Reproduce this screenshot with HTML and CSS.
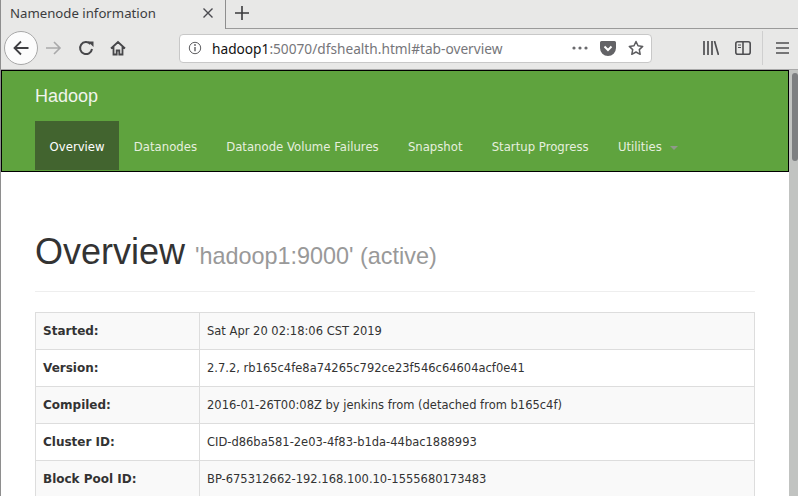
FILE: index.html
```html
<!DOCTYPE html>
<html lang="en">
<head>
<meta charset="utf-8">
<title>Namenode information</title>
<link rel="stylesheet" href="styles.css">
</head>
<body>
<div class="tabstrip">
  <div class="tab">
    <span class="tab-title">Namenode information</span>
    <svg class="tab-close" width="12" height="12" viewBox="0 0 12 12"><path d="M1.5 1.5l9 9M10.500 1.500l-9 9" stroke="#4a4a4f" stroke-width="1.400" fill="none"/></svg>
  </div>
  <div class="tab-rest">
    <svg class="new-tab" width="16" height="16" viewBox="0 0 16 16"><path d="M8 1v14M1 8h14" stroke="#3a3a3d" stroke-width="1.600" fill="none"/></svg>
  </div>
</div>
<div class="toolbar">
  <div class="back-btn">
    <svg width="18" height="18" viewBox="0 0 18 18"><path d="M16.500 9H2.500M9 2.500L2.500 9 9 15.500" stroke="#3f3f42" stroke-width="1.800" fill="none"/></svg>
  </div>
  <svg class="forward" width="18" height="18" viewBox="0 0 18 18"><path d="M2 9h14M10 3l6 6-6 6" stroke="#a9a9aa" stroke-width="1.600" fill="none"/></svg>
  <svg class="reload" width="16" height="16" viewBox="0 0 16 16"><path d="M14 9A6 6 0 1 1 12.500 4" stroke="#47474a" stroke-width="2" fill="none"/><path d="M10 1.500h5.500V7z" fill="#47474a"/></svg>
  <svg class="home" width="16" height="16" viewBox="0 0 16 16"><path d="M1 8.500L8 2l7 6.500M3.500 7v7.500h3.200v-4h2.600v4h3.200V7" stroke="#47474a" stroke-width="1.800" fill="none"/></svg>
  <div class="urlbar">
    <svg class="info" width="14" height="14" viewBox="0 0 14 14"><circle cx="7" cy="7" r="5.700" stroke="#5f5f62" fill="none"/><path d="M7 6v4.200" stroke="#5f5f62" stroke-width="1.400"/><circle cx="7" cy="4" r=".9" fill="#5f5f62"/></svg>
    <span class="url"><span class="host">hadoop1</span>:50070/dfshealth.html#tab-overview</span>
    <svg class="dots" width="16" height="4" viewBox="0 0 16 4"><circle cx="2" cy="2" r="1.600"/><circle cx="8" cy="2" r="1.600"/><circle cx="14" cy="2" r="1.600"/></svg>
    <svg class="pocket" width="16" height="15" viewBox="0 0 16 15"><path d="M1.500 0h13A1.500 1.500 0 0 1 16 1.500V7a8 8 0 0 1-16 0V1.500A1.500 1.500 0 0 1 1.500 0z" fill="#636366"/><path d="M4.500 5.500L8 9l3.500-3.500" stroke="#fff" stroke-width="2" fill="none"/></svg>
    <svg class="star" width="16" height="16" viewBox="0 0 16 16"><path d="M8 1.500l2 4.300 4.700.6-3.400 3.200.9 4.700L8 12l-4.200 2.300.9-4.700L1.300 6.400 6 5.800z" stroke="#5c5c5f" stroke-width="1.500" stroke-linejoin="round" fill="none"/></svg>
  </div>
  <svg class="library" width="16" height="14" viewBox="0 0 16 14"><path d="M1 0v14M5 0v14M9 0v14M11.500 0l4 14" stroke="#4f4f52" stroke-width="1.700" fill="none"/></svg>
  <svg class="sidebar-icon" width="16" height="14" viewBox="0 0 16 14"><rect x=".8" y=".8" width="14.400" height="12.400" rx="2" stroke="#4f4f52" stroke-width="1.600" fill="none"/><path d="M8 1v12" stroke="#4f4f52" stroke-width="1.600"/><path d="M3 4h3M3 6.500h3" stroke="#4f4f52"/></svg>
  <div class="divider"></div>
  <svg class="menu" width="13" height="12" viewBox="0 0 13 12"><path d="M0 1h13M0 6h13M0 11h13" stroke="#4f4f52" stroke-width="1.600"/></svg>
</div>
<div class="viewport">
  <div class="page">
    <nav class="navbar">
      <div class="brand">Hadoop</div>
      <ul class="nav">
        <li class="nav-item active">Overview</li>
        <li class="nav-item">Datanodes</li>
        <li class="nav-item">Datanode Volume Failures</li>
        <li class="nav-item">Snapshot</li>
        <li class="nav-item">Startup Progress</li>
        <li class="nav-item">Utilities<span class="caret"></span></li>
      </ul>
    </nav>
    <main class="container">
      <h1 class="title">Overview <small class="subtitle">'hadoop1:9000' (active)</small></h1>
      <table class="info-table">
        <tr><th>Started:</th><td>Sat Apr 20 02:18:06 CST 2019</td></tr>
        <tr><th>Version:</th><td>2.7.2, rb165c4fe8a74265c792ce23f546c64604acf0e41</td></tr>
        <tr><th>Compiled:</th><td>2016-01-26T00:08Z by jenkins from (detached from b165c4f)</td></tr>
        <tr><th>Cluster ID:</th><td>CID-d86ba581-2e03-4f83-b1da-44bac1888993</td></tr>
        <tr><th>Block Pool ID:</th><td>BP-675312662-192.168.100.10-1555680173483</td></tr>
      </table>
    </main>
  </div>
  <div class="scrollbar"><div class="thumb"></div></div>
</div>
</body>
</html>
```
FILE: styles.css
```css
* { box-sizing: border-box; }
html, body { margin: 0; padding: 0; height: 496px; overflow: hidden; background: #fff; }
body { display: flex; flex-direction: column; font-family: "Liberation Sans", sans-serif; }

.tabstrip { display: flex; height: 29px; flex: none; background: #e8e8e7; }
.tab { width: 226px; display: flex; align-items: center; justify-content: space-between; padding: 0 11px 3px 9px; border-left: 1px solid #8e8e8e; border-right: 1px solid #8e8e8e; }
.tab-title { font: 13.200px "Noto Sans", sans-serif; color: #3c3c3e; }
.tab-rest { flex: 1; display: flex; align-items: center; padding: 0 0 3px 8px; border-bottom: 1px solid #9a9a9a; }

.toolbar { display: flex; align-items: center; height: 41px; flex: none; background: #e8e8e7; border-bottom: 1px solid #a9a9a9; border-left: 1px solid #8e8e8e; padding: 0 0 2px 3px; }
.back-btn { width: 34px; height: 34px; border-radius: 50%; background: #fcfcfc; border: 1px solid #a8a8a8; display: flex; align-items: center; justify-content: center; flex: none; }
.forward { margin-left: 6px; }
.reload { margin-left: 16px; }
.home { margin-left: 16px; }
.urlbar { display: flex; align-items: center; width: 473px; height: 29px; margin-left: 53px; padding: 0 7px 0 8px; background: #fff; border: 1px solid #c8c8c8; border-radius: 4px; flex: none; }
.url { font: 13.700px "Noto Sans", sans-serif; color: #76767a; margin-left: 10px; flex: 1; white-space: nowrap; }
.host { color: #111; }
.dots { fill: #6a6a6d; margin-right: 12px; }
.pocket { margin-right: 12px; }
.library { margin-left: 51px; }
.sidebar-icon { margin-left: 16px; }
.divider { width: 1px; height: 34px; background: #cfcfcf; margin: 0 13px 0 11px; }

.viewport { flex: 1; display: flex; min-height: 0; border-left: 1px solid #8e8e8e; }
.page { flex: 1; min-width: 0; }
.scrollbar { width: 9px; background: #c1c3c1; padding-top: 3px; }
.thumb { width: 6px; height: 88px; margin-left: 3px; background: #7d7f81; border-radius: 3px; }

.navbar { height: 102px; background: #5fa33e; border: 1px solid #000; padding: 0 33px; }
.brand { color: #f0f4ec; font-size: 18px; line-height: 20px; padding-top: 15px; height: 50px; }
.nav { display: flex; list-style: none; margin: 0; padding: 0; }
.nav-item { height: 49px; padding: 16px 14.600px 0; font: 11.700px/20px "DejaVu Sans", sans-serif; color: #e6efdf; white-space: nowrap; }
.nav-item.active { background: #42642f; color: #fff; }
.caret { display: inline-block; margin-left: 8px; vertical-align: middle; border-top: 4px solid #8f9a8a; border-left: 4px solid transparent; border-right: 4px solid transparent; }

.container { padding: 0 34px; }
.title { margin: 60px 0 20px; padding-bottom: 15px; border-bottom: 1px solid #eee; font-size: 36px; font-weight: 500; line-height: 40px; color: #333; }
.subtitle { font-size: 23.400px; font-weight: 400; color: #999; }
.info-table { width: 100%; border-collapse: collapse; font: 11.500px/20px "DejaVu Sans", sans-serif; color: #333; }
.info-table th, .info-table td { padding: 8px 8px 8px 7px; border: 1px solid #ddd; text-align: left; vertical-align: top; }
.info-table th { width: 164px; font-size: 12px; font-weight: 700; }
.info-table tr:nth-child(odd) { background: #f9f9f9; }
```
